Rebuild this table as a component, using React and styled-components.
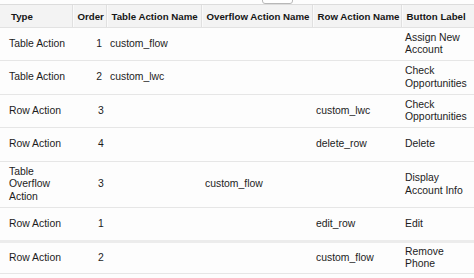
import styled, { createGlobalStyle } from "styled-components";

const GlobalStyle = createGlobalStyle`
  html, body {
    margin: 0;
    padding: 0;
    background: #fdfdfd;
  }
`;

const columns = [
  { key: "type", title: "Type", width: 72 },
  { key: "order", title: "Order", width: 34, right: true },
  { key: "table", title: "Table Action Name", width: 95 },
  { key: "overflow", title: "Overflow Action Name", width: 111 },
  { key: "row", title: "Row Action Name", width: 89 },
  { key: "label", title: "Button Label", width: 73 },
];

const rows = [
  { type: "Table Action", order: "1", table: "custom_flow", label: "Assign New Account", h: 33 },
  { type: "Table Action", order: "2", table: "custom_lwc", label: "Check Opportunities", h: 34 },
  { type: "Row Action", order: "3", orderLeft: true, row: "custom_lwc", label: "Check Opportunities", h: 33 },
  { type: "Row Action", order: "4", orderLeft: true, row: "delete_row", label: "Delete", h: 34 },
  { type: "Table Overflow Action", order: "3", orderLeft: true, overflow: "custom_flow", label: "Display Account Info", h: 46 },
  { type: "Row Action", order: "1", orderLeft: true, row: "edit_row", label: "Edit", h: 34 },
  { type: "Row Action", order: "2", orderLeft: true, row: "custom_flow", label: "Remove Phone", h: 32, gap: true },
];

const Page = styled.div`
  position: relative;
  width: 474px;
  height: 278px;
  overflow: hidden;
  padding-top: 4px;
  box-sizing: border-box;
  font-family: "Liberation Sans", Arial, sans-serif;
  color: #1c1c1c;
`;

const Tab = styled.div`
  position: absolute;
  left: 262px;
  top: -4px;
  width: 31px;
  height: 8px;
  border: 1px solid #b8b8b8;
  border-radius: 3px;
  background: #fff;
  box-sizing: border-box;
`;

const Table = styled.table`
  border-collapse: collapse;
  table-layout: fixed;
  width: 474px;
`;

const HeadCell = styled.th`
  height: 22px;
  padding: 0 4px 0 ${(p) => (p.$first ? "11px" : "5px")};
  background: #f3f3f3;
  border-top: 1px solid #dcdcdc;
  border-bottom: 1px solid #e2e2e2;
  border-left: ${(p) => (p.$first ? "none" : "1px solid #e0e0e0")};
  box-shadow: ${(p) => (p.$first ? "none" : "inset 1px 0 0 #fafafa")};
  font-size: 9.7px;
  font-weight: bold;
  text-align: ${(p) => (p.$right ? "right" : "left")};
  white-space: nowrap;
  overflow: hidden;
  color: #161616;
`;

const Row = styled.tr`
  border-bottom: 1px solid #e6e6e6;
  border-top: ${(p) => (p.$gap ? "3px solid #ececec" : "none")};
`;

const Cell = styled.td`
  padding: 0 4px 0 ${(p) => (p.$first ? "9px" : "4px")};
  font-size: 10.4px;
  line-height: 12.5px;
  vertical-align: middle;
  text-align: ${(p) => (p.$right ? "right" : "left")};
`;

const OrderText = styled.span`
  display: inline-block;
  width: 100%;
  text-align: ${(p) => (p.$left ? "left" : "right")};
  padding-left: ${(p) => (p.$left ? "22px" : "0")};
  box-sizing: border-box;
`;

export default function App() {
  return (
    <>
      <GlobalStyle />
      <Page>
        <Tab />
        <Table>
          <colgroup>
            {columns.map((c) => (
              <col key={c.key} style={{ width: c.width }} />
            ))}
          </colgroup>
          <thead>
            <tr>
              {columns.map((c, i) => (
                <HeadCell key={c.key} $first={i === 0} $right={c.right}>
                  {c.title}
                </HeadCell>
              ))}
            </tr>
          </thead>
          <tbody>
            {rows.map((r, idx) => (
              <Row key={idx} $gap={r.gap} style={{ height: r.h }}>
                <Cell $first>{r.type}</Cell>
                <Cell>
                  <OrderText $left={r.orderLeft}>{r.order}</OrderText>
                </Cell>
                <Cell>{r.table}</Cell>
                <Cell>{r.overflow}</Cell>
                <Cell>{r.row}</Cell>
                <Cell>{r.label}</Cell>
              </Row>
            ))}
          </tbody>
        </Table>
      </Page>
    </>
  );
}
